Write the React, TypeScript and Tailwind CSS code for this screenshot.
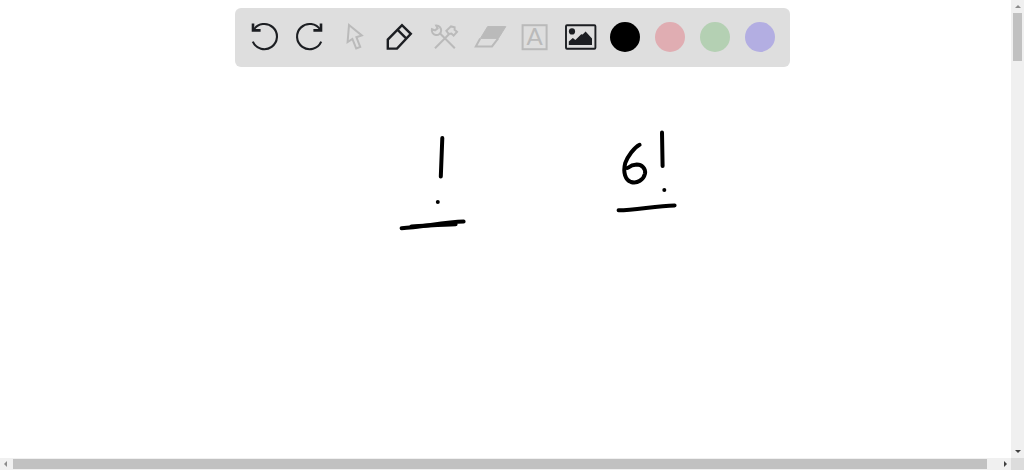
import { useState } from 'react';
import type { ReactNode } from 'react';

interface Tool {
  id: string;
  label: string;
  muted?: boolean;
  icon: ReactNode;
}

const tools: Tool[] = [
  {
    id: 'undo',
    label: 'Undo',
    icon: (
      <>
        <path d="M2.8 19.6A12.6 12.6 0 1 0 3.6 8" />
        <path d="M3 1.6v6.8h7.6" strokeWidth="2.6" />
      </>
    ),
  },
  {
    id: 'redo',
    label: 'Redo',
    icon: (
      <>
        <path d="M26.2 19.6A12.6 12.6 0 1 1 25.4 8" />
        <path d="M26 1.6v6.8h-7.6" strokeWidth="2.6" />
      </>
    ),
  },
  {
    id: 'select',
    label: 'Select',
    muted: true,
    icon: <path d="M9 3 21.8 13.4l-5.4 1.8 3.8 9.8-4 1.4-3.8-9.4-4.8 3z" />,
  },
  {
    id: 'pen',
    label: 'Pen',
    icon: <path d="M2.8 26.6v-9L17 3.1l8.8 8.8L12 26.6zM12.4 7.6l9 9" strokeWidth="2.4" />,
  },
  {
    id: 'tools',
    label: 'Tools',
    muted: true,
    icon: (
      <>
        <path d="M1.9 7.2A4.7 4.7 0 1 0 6.2 3.6l1.4 2.8-2.6 2z" />
        <path d="M9.8 11.2 24.8 26.2M5 26.2 19.2 12" />
        <path d="m16.4 8.8 4.6-4.4 3.6.8v2.6l2.4 2-3.4 3.8-2.2-2-2.6.4z" />
      </>
    ),
  },
  {
    id: 'eraser',
    label: 'Eraser',
    muted: true,
    icon: (
      <>
        <path d="M12.6 4.6h18.2L23.4 16.4H5.4z" fill="currentColor" strokeWidth="1" />
        <path d="M5.2 16.6.8 24.4h16.2l6.2-8" />
      </>
    ),
  },
  {
    id: 'text',
    label: 'Text',
    muted: true,
    icon: (
      <>
        <rect x="2.6" y="3.2" width="24" height="24" />
        <text
          x="14.6"
          y="23"
          textAnchor="middle"
          fill="currentColor"
          stroke="none"
          className="font-[Lato,sans-serif] text-[24px]"
        >
          A
        </text>
      </>
    ),
  },
  {
    id: 'image',
    label: 'Image',
    icon: (
      <>
        <rect x="1" y="3.2" width="29.4" height="23.6" rx="1" strokeWidth="1.9" />
        <circle cx="7" cy="9.4" r="3.1" fill="currentColor" stroke="none" />
        <path
          d="M3.8 23V19.6l4-3.6 2.6 2 5.8-5.8 1.4.4 3-3.2 6.4 7V23z"
          fill="currentColor"
          stroke="none"
        />
      </>
    ),
  },
];

const colors = [
  { name: 'Black', className: 'bg-black' },
  { name: 'Red', className: 'bg-[#e0adb2]' },
  { name: 'Green', className: 'bg-[#b4d0b3]' },
  { name: 'Purple', className: 'bg-[#b3aee2]' },
];

const strokes = [
  'M442.3 138 440.8 176.5',
  'M437.8 202v.1',
  'M401.6 228.2C420 227.4 444 222.2 463.6 221.6',
  'M411.5 226.4C428 225.6 442 224.6 455.6 224.2',
  'M639.6 144.8C634 147.6 627.6 156.4 625.2 163.2C622.8 172.6 625.4 179.8 631 182C637.4 184 643.6 179.6 645 173.6C645.8 168.2 641.8 164.6 636.8 164.6C633 164.8 629.8 166.4 627.6 168',
  'M662 132.6 662.6 166',
  'M664.3 190v.1',
  'M618.6 210.3C636 210 656 205.8 674.6 205.4',
];

function Toolbar() {
  const [tool, setTool] = useState('pen');
  const [color, setColor] = useState('Black');

  return (
    <div
      role="toolbar"
      aria-label="Drawing tools"
      className="flex gap-[15px] rounded-md bg-[#dedede] px-[15px] pt-3.5 pb-[15px]"
    >
      {tools.map((t) => (
        <button
          key={t.id}
          type="button"
          aria-label={t.label}
          aria-pressed={tool === t.id}
          onClick={() => setTool(t.id)}
          className={t.muted ? 'size-[30px] text-[#bababa]' : 'size-[30px] text-[#1c1e22]'}
        >
          <svg
            viewBox="0 0 30 30"
            fill="none"
            stroke="currentColor"
            strokeWidth={t.muted ? 2 : 2.1}
            className="size-[30px] overflow-visible"
          >
            {t.icon}
          </svg>
        </button>
      ))}
      {colors.map((c) => (
        <button
          key={c.name}
          type="button"
          aria-label={c.name}
          aria-pressed={color === c.name}
          onClick={() => setColor(c.name)}
          className={`size-[30px] rounded-full ${c.className}`}
        />
      ))}
    </div>
  );
}

function ScrollButton({ label, points, faint }: { label: string; points: string; faint?: boolean }) {
  return (
    <button
      type="button"
      aria-label={label}
      className={`flex size-3 shrink-0 items-center justify-center ${faint ? 'text-[#8c8c8c]' : 'text-[#404040]'}`}
    >
      <svg viewBox="0 0 6 6" fill="currentColor" className="size-1.5">
        <polygon points={points} />
      </svg>
    </button>
  );
}

export default function App() {
  return (
    <div className="relative flex h-screen flex-col overflow-hidden bg-white">
      <div className="flex min-h-0 flex-1">
        <main className="min-w-0 flex-1">
          <svg
            role="img"
            aria-label="Whiteboard"
            fill="none"
            stroke="black"
            strokeWidth="4"
            strokeLinecap="round"
            strokeLinejoin="round"
            className="h-full w-full"
          >
            {strokes.map((d) => (
              <path key={d} d={d} />
            ))}
          </svg>
        </main>
        <div className="flex w-[13px] flex-col items-center bg-[#f0f0f0]">
          <ScrollButton label="Scroll up" points="0,5 3,2 6,5" faint />
          <div className="min-h-0 w-full flex-1 px-0.5 pt-px">
            <div className="h-[11%] bg-[#c1c1c1]" />
          </div>
          <ScrollButton label="Scroll down" points="0,1 6,1 3,4" />
        </div>
      </div>

      <div className="flex h-3 bg-[#f0f0f0]">
        <ScrollButton label="Scroll left" points="4,0 4,6 1,3" faint />
        <div className="min-w-0 flex-1 py-px pr-3 pl-px">
          <div className="h-full bg-[#c1c1c1]" />
        </div>
        <ScrollButton label="Scroll right" points="2,0 5,3 2,6" />
        <div className="w-[13px] bg-[#dcdcdc]" />
      </div>

      <header className="absolute inset-x-0 top-2 flex justify-center">
        <Toolbar />
      </header>
    </div>
  );
}
